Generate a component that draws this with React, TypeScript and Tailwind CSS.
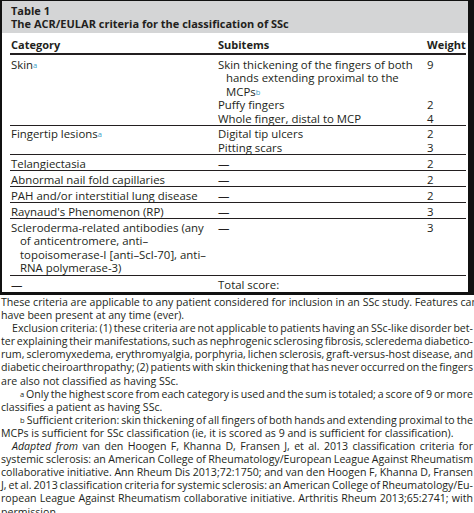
const font = { fontFamily: '"Open Sans", "Noto Sans", sans-serif' };

function Sup({ children, teal = false }: { children: string; teal?: boolean }) {
  return (
    <sup className={`relative -top-[1px] text-[7.5px] ${teal ? 'text-[#3d9fc7]' : 'text-[#231f20]'}`}>{children}</sup>
  );
}

interface SubRow {
  text: React.ReactNode;
  weight?: string;
}

interface Row {
  category: React.ReactNode;
  subs: SubRow[];
  pad?: string;
}

const rows: Row[] = [
  {
    category: (
      <>
        Skin<Sup teal>a</Sup>
      </>
    ),
    pad: 'pt-[3px]',
    subs: [
      {
        text: (
          <div className="pl-[8px] [text-indent:-8px]">
            Skin thickening of the fingers of both
            <br />
            hands extending proximal to the
            <br />
            MCPs<Sup teal>b</Sup>
          </div>
        ),
        weight: '9'
      },
      { text: 'Puffy fingers', weight: '2' },
      { text: 'Whole finger, distal to MCP', weight: '4' }
    ]
  },
  {
    category: (
      <>
        Fingertip lesions<Sup teal>a</Sup>
      </>
    ),
    pad: 'pt-[1px]',
    subs: [
      { text: 'Digital tip ulcers', weight: '2' },
      { text: 'Pitting scars', weight: '3' }
    ]
  },
  { category: 'Telangiectasia', subs: [{ text: '—', weight: '2' }] },
  { category: 'Abnormal nail fold capillaries', subs: [{ text: '—', weight: '2' }] },
  { category: 'PAH and/or interstitial lung disease', subs: [{ text: '—', weight: '2' }] },
  { category: "Raynaud's Phenomenon (RP)", subs: [{ text: '—', weight: '3' }] },
  {
    category: (
      <div className="pl-[9px] [text-indent:-9px]">
        Scleroderma-related antibodies (any
        <br />
        of anticentromere, anti–
        <br />
        topoisomerase-I [anti–Scl-70], anti–
        <br />
        RNA polymerase-3)
      </div>
    ),
    subs: [{ text: '—', weight: '3' }]
  }
];

function TableRow({ row }: { row: Row }) {
  return (
    <div className={`flex border-b border-[#231f20] ${row.pad ?? 'pt-[1.5px]'}`}>
      <div className="w-[208px] shrink-0 pl-[1px]">{row.category}</div>
      <div className="flex-1">
        {row.subs.map((s, i) => (
          <div key={i} className="flex">
            <div className="w-[209px] shrink-0">{s.text}</div>
            <div className="flex-1">{s.weight}</div>
          </div>
        ))}
      </div>
    </div>
  );
}

function Line({
  children,
  indent = 0,
  justify = true,
  wide = false
}: {
  children: React.ReactNode;
  indent?: number;
  justify?: boolean;
  wide?: boolean;
}) {
  return (
    <div
      className={`${justify ? 'text-justify [text-align-last:justify] [word-spacing:-2.5px]' : 'text-left whitespace-nowrap'} ${
        indent === 12 ? 'pl-[11px]' : indent === 19 ? 'pl-[19px]' : ''
      } ${wide ? '-mr-[5px]' : ''}`}>
      {children}
    </div>
  );
}

export default function App() {
  return (
    <div className="w-[474px] h-[513px] overflow-hidden bg-white text-[#231f20] text-[10.6px]" style={font}>
      <div className="w-[474px] border-l-[2px] border-r-[6px] border-b-[3px] border-t border-[#111]">
        <div className="bg-[#d4d5d6] pl-[9px] pt-[3px] h-[32px] font-bold leading-[13px] text-[11px]">
          <div>Table 1</div>
          <div>The ACR/EULAR criteria for the classification of SSc</div>
        </div>
        <div className="ml-[8px] mr-[2px] leading-[13.5px] text-[11.4px]">
          <div className="flex pt-[5px] pb-[1px] border-b-2 border-[#231f20] font-bold text-[11px]">
            <div className="w-[208px] shrink-0 pl-[1px]">Category</div>
            <div className="w-[209px] shrink-0">Subitems</div>
            <div className="flex-1">Weight</div>
          </div>
          {rows.map((r, i) => (
            <TableRow key={i} row={r} />
          ))}
          <div className="flex pt-[2px] pb-[1px]">
            <div className="w-[208px] shrink-0 pl-[1px]">—</div>
            <div className="flex-1">Total score:</div>
          </div>
        </div>
      </div>
      <div className="w-[473px] pl-[1px] pt-[1px] leading-[13.1px]">
        <Line wide>These criteria are applicable to any patient considered for inclusion in an SSc study. Features can</Line>
        <Line justify={false}>have been present at any time (ever).</Line>
        <Line indent={12}>Exclusion criteria: (1) these criteria are not applicable to patients having an SSc-like disorder bet-</Line>
        <Line>ter explaining their manifestations, such as nephrogenic sclerosing fibrosis, scleredema diabetico-</Line>
        <Line>rum, scleromyxedema, erythromyalgia, porphyria, lichen sclerosis, graft-versus-host disease, and</Line>
        <Line>diabetic cheiroarthropathy; (2) patients with skin thickening that has never occurred on the fingers</Line>
        <Line justify={false}>are also not classified as having SSc.</Line>
        <Line indent={19}>
          <Sup>a</Sup> Only the highest score from each category is used and the sum is totaled; a score of 9 or more
        </Line>
        <Line justify={false}>classifies a patient as having SSc.</Line>
        <Line indent={19}>
          <Sup>b</Sup> Sufficient criterion: skin thickening of all fingers of both hands and extending proximal to the
        </Line>
        <Line justify={false}>MCPs is sufficient for SSc classification (ie, it is scored as 9 and is sufficient for classification).</Line>
        <Line indent={12}>
          <i>Adapted from</i> van den Hoogen F, Khanna D, Fransen J, et al. 2013 classification criteria for
        </Line>
        <Line>systemic sclerosis: an American College of Rheumatology/European League Against Rheumatism</Line>
        <Line>collaborative initiative. Ann Rheum Dis 2013;72:1750; and van den Hoogen F, Khanna D, Fransen</Line>
        <Line>J, et al. 2013 classification criteria for systemic sclerosis: an American College of Rheumatology/Eu-</Line>
        <Line>ropean League Against Rheumatism collaborative initiative. Arthritis Rheum 2013;65:2741; with</Line>
        <Line justify={false}>permission.</Line>
      </div>
    </div>
  );
}
